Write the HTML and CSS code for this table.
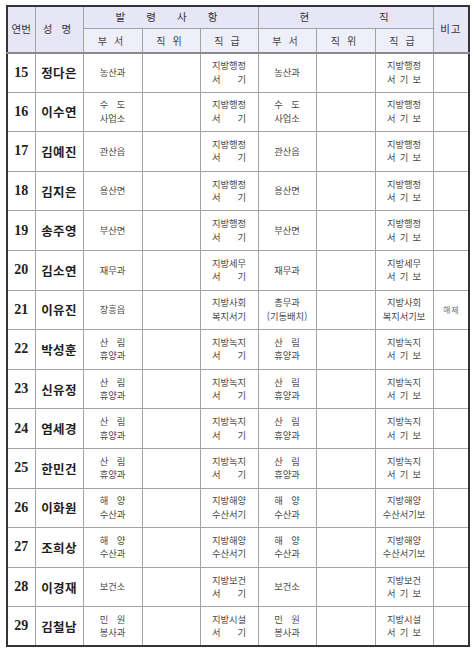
FILE: index.html
```html
<!DOCTYPE html>
<html lang="ko">
<head>
<meta charset="utf-8">
<link rel="stylesheet" href="styles.css">
</head>
<body>
<table class="roster">
  <colgroup>
    <col class="c-no"><col class="c-name"><col class="c-a"><col class="c-b"><col class="c-c"><col class="c-d"><col class="c-e"><col class="c-f"><col class="c-note">
  </colgroup>
  <thead>
    <tr class="h1">
      <th rowspan="2" class="hd">연번</th>
      <th rowspan="2" class="hd sp-name">성명</th>
      <th colspan="3" class="hd"><div class="spread wide"><span>발</span><span>령</span><span>사</span><span>항</span></div></th>
      <th colspan="3" class="hd"><div class="spread huge"><span>현</span><span>직</span></div></th>
      <th rowspan="2" class="hd sp-note">비고</th>
    </tr>
    <tr class="h2">
      <th class="sub">부서</th><th class="sub">직위</th><th class="sub">직급</th>
      <th class="sub">부서</th><th class="sub">직위</th><th class="sub">직급</th>
    </tr>
  </thead>
  <tbody>
    <tr class="r"><td class="no">15</td><td class="nm">정다은</td>
      <td class="tx">농산과</td><td></td>
      <td class="tx"><div class="stk"><div>지방행정</div><div class="j">서 기</div></div></td>
      <td class="tx">농산과</td><td></td>
      <td class="tx"><div class="stk"><div>지방행정</div><div class="j">서 기 보</div></div></td><td></td></tr>
    <tr class="r"><td class="no">16</td><td class="nm">이수연</td>
      <td class="tx"><div class="stk"><div class="j">수 도</div><div>사업소</div></div></td><td></td>
      <td class="tx"><div class="stk"><div>지방행정</div><div class="j">서 기</div></div></td>
      <td class="tx"><div class="stk"><div class="j">수 도</div><div>사업소</div></div></td><td></td>
      <td class="tx"><div class="stk"><div>지방행정</div><div class="j">서 기 보</div></div></td><td></td></tr>
    <tr class="r"><td class="no">17</td><td class="nm">김예진</td>
      <td class="tx">관산읍</td><td></td>
      <td class="tx"><div class="stk"><div>지방행정</div><div class="j">서 기</div></div></td>
      <td class="tx">관산읍</td><td></td>
      <td class="tx"><div class="stk"><div>지방행정</div><div class="j">서 기 보</div></div></td><td></td></tr>
    <tr class="r"><td class="no">18</td><td class="nm">김지은</td>
      <td class="tx">용산면</td><td></td>
      <td class="tx"><div class="stk"><div>지방행정</div><div class="j">서 기</div></div></td>
      <td class="tx">용산면</td><td></td>
      <td class="tx"><div class="stk"><div>지방행정</div><div class="j">서 기 보</div></div></td><td></td></tr>
    <tr class="r"><td class="no">19</td><td class="nm">송주영</td>
      <td class="tx">부산면</td><td></td>
      <td class="tx"><div class="stk"><div>지방행정</div><div class="j">서 기</div></div></td>
      <td class="tx">부산면</td><td></td>
      <td class="tx"><div class="stk"><div>지방행정</div><div class="j">서 기 보</div></div></td><td></td></tr>
    <tr class="r"><td class="no">20</td><td class="nm">김소연</td>
      <td class="tx">재무과</td><td></td>
      <td class="tx"><div class="stk"><div>지방세무</div><div class="j">서 기</div></div></td>
      <td class="tx">재무과</td><td></td>
      <td class="tx"><div class="stk"><div>지방세무</div><div class="j">서 기 보</div></div></td><td></td></tr>
    <tr class="r"><td class="no">21</td><td class="nm">이유진</td>
      <td class="tx">장흥읍</td><td></td>
      <td class="tx"><div class="stk"><div>지방사회</div><div>복지서기</div></div></td>
      <td class="tx"><div class="stk"><div>총무과</div><div>(기동배치)</div></div></td><td></td>
      <td class="tx"><div class="stk"><div>지방사회</div><div>복지서기보</div></div></td>
      <td class="memo">해제</td></tr>
    <tr class="r"><td class="no">22</td><td class="nm">박성훈</td>
      <td class="tx"><div class="stk"><div class="j">산 림</div><div>휴양과</div></div></td><td></td>
      <td class="tx"><div class="stk"><div>지방녹지</div><div class="j">서 기</div></div></td>
      <td class="tx"><div class="stk"><div class="j">산 림</div><div>휴양과</div></div></td><td></td>
      <td class="tx"><div class="stk"><div>지방녹지</div><div class="j">서 기 보</div></div></td><td></td></tr>
    <tr class="r"><td class="no">23</td><td class="nm">신유정</td>
      <td class="tx"><div class="stk"><div class="j">산 림</div><div>휴양과</div></div></td><td></td>
      <td class="tx"><div class="stk"><div>지방녹지</div><div class="j">서 기</div></div></td>
      <td class="tx"><div class="stk"><div class="j">산 림</div><div>휴양과</div></div></td><td></td>
      <td class="tx"><div class="stk"><div>지방녹지</div><div class="j">서 기 보</div></div></td><td></td></tr>
    <tr class="r"><td class="no">24</td><td class="nm">염세경</td>
      <td class="tx"><div class="stk"><div class="j">산 림</div><div>휴양과</div></div></td><td></td>
      <td class="tx"><div class="stk"><div>지방녹지</div><div class="j">서 기</div></div></td>
      <td class="tx"><div class="stk"><div class="j">산 림</div><div>휴양과</div></div></td><td></td>
      <td class="tx"><div class="stk"><div>지방녹지</div><div class="j">서 기 보</div></div></td><td></td></tr>
    <tr class="r"><td class="no">25</td><td class="nm">한민건</td>
      <td class="tx"><div class="stk"><div class="j">산 림</div><div>휴양과</div></div></td><td></td>
      <td class="tx"><div class="stk"><div>지방녹지</div><div class="j">서 기</div></div></td>
      <td class="tx"><div class="stk"><div class="j">산 림</div><div>휴양과</div></div></td><td></td>
      <td class="tx"><div class="stk"><div>지방녹지</div><div class="j">서 기 보</div></div></td><td></td></tr>
    <tr class="r"><td class="no">26</td><td class="nm">이화원</td>
      <td class="tx"><div class="stk"><div class="j">해 양</div><div>수산과</div></div></td><td></td>
      <td class="tx"><div class="stk"><div>지방해양</div><div>수산서기</div></div></td>
      <td class="tx"><div class="stk"><div class="j">해 양</div><div>수산과</div></div></td><td></td>
      <td class="tx"><div class="stk"><div>지방해양</div><div>수산서기보</div></div></td><td></td></tr>
    <tr class="r"><td class="no">27</td><td class="nm">조희상</td>
      <td class="tx"><div class="stk"><div class="j">해 양</div><div>수산과</div></div></td><td></td>
      <td class="tx"><div class="stk"><div>지방해양</div><div>수산서기</div></div></td>
      <td class="tx"><div class="stk"><div class="j">해 양</div><div>수산과</div></div></td><td></td>
      <td class="tx"><div class="stk"><div>지방해양</div><div>수산서기보</div></div></td><td></td></tr>
    <tr class="r"><td class="no">28</td><td class="nm">이경재</td>
      <td class="tx">보건소</td><td></td>
      <td class="tx"><div class="stk"><div>지방보건</div><div class="j">서 기</div></div></td>
      <td class="tx">보건소</td><td></td>
      <td class="tx"><div class="stk"><div>지방보건</div><div class="j">서 기 보</div></div></td><td></td></tr>
    <tr class="r"><td class="no">29</td><td class="nm">김철남</td>
      <td class="tx"><div class="stk"><div class="j">민 원</div><div>봉사과</div></div></td><td></td>
      <td class="tx"><div class="stk"><div>지방시설</div><div class="j">서 기</div></div></td>
      <td class="tx"><div class="stk"><div class="j">민 원</div><div>봉사과</div></div></td><td></td>
      <td class="tx"><div class="stk"><div>지방시설</div><div class="j">서 기 보</div></div></td><td></td></tr>
  </tbody>
</table>
</body>
</html>
```

FILE: styles.css
```css
html, body {
  margin: 0;
  padding: 0;
  background: #ffffff;
}

.roster {
  border-collapse: collapse;
  table-layout: fixed;
  width: 464px;
  margin: 5px 0 0 6px;
  border: 2px solid #333333;
  font-family: "Noto Sans CJK KR", "Noto Sans", sans-serif;
  color: #444444;
}

.c-no { width: 28px; }
.c-name { width: 48px; }
.c-a { width: 59px; }
.c-b { width: 58px; }
.c-c { width: 58px; }
.c-d { width: 58px; }
.c-e { width: 59px; }
.c-f { width: 58px; }
.c-note { width: 36px; }

.roster th,
.roster td {
  border: 1px solid #a3a3a3;
  padding: 0;
  text-align: center;
  vertical-align: middle;
  white-space: nowrap;
}

.h1 { height: 22px; }
.h2 { height: 24.5px; }
.r { height: 39.6px; }

.hd {
  background: #e6e6f7;
  font-size: 10.5px;
  line-height: 16px;
  font-weight: 400;
  color: #333333;
}

.sub {
  background: #efeffa;
  font-size: 10px;
  font-weight: 400;
  color: #444444;
  letter-spacing: 7px;
  text-indent: 3px;
  border-bottom: 2px solid #8a8a8a !important;
}

.h1 th[rowspan] {
  border-bottom: 2px solid #8a8a8a;
}

.spread {
  display: flex;
  justify-content: space-between;
}

.wide { padding: 0 40px 0 32px; }
.huge { padding: 0 44px 0 41px; }

.sp-name { letter-spacing: 9px; text-indent: 5px; }
.sp-note { letter-spacing: 1px; }

.no {
  font-family: "Liberation Serif", "DejaVu Serif", serif;
  font-size: 14px;
  font-weight: 700;
  color: #222222;
}

.nm {
  font-size: 12.5px;
  font-weight: 700;
  color: #1e1e1e;
  letter-spacing: 0.3px;
}

.tx {
  font-size: 9.3px;
  line-height: 13.4px;
  color: #4a4a4a;
}

.stk {
  display: inline-block;
  vertical-align: middle;
}

.j {
  text-align: justify;
  text-align-last: justify;
}

.memo {
  font-size: 8px;
  color: #707070;
  letter-spacing: 1px;
  text-indent: 1px;
}
```
